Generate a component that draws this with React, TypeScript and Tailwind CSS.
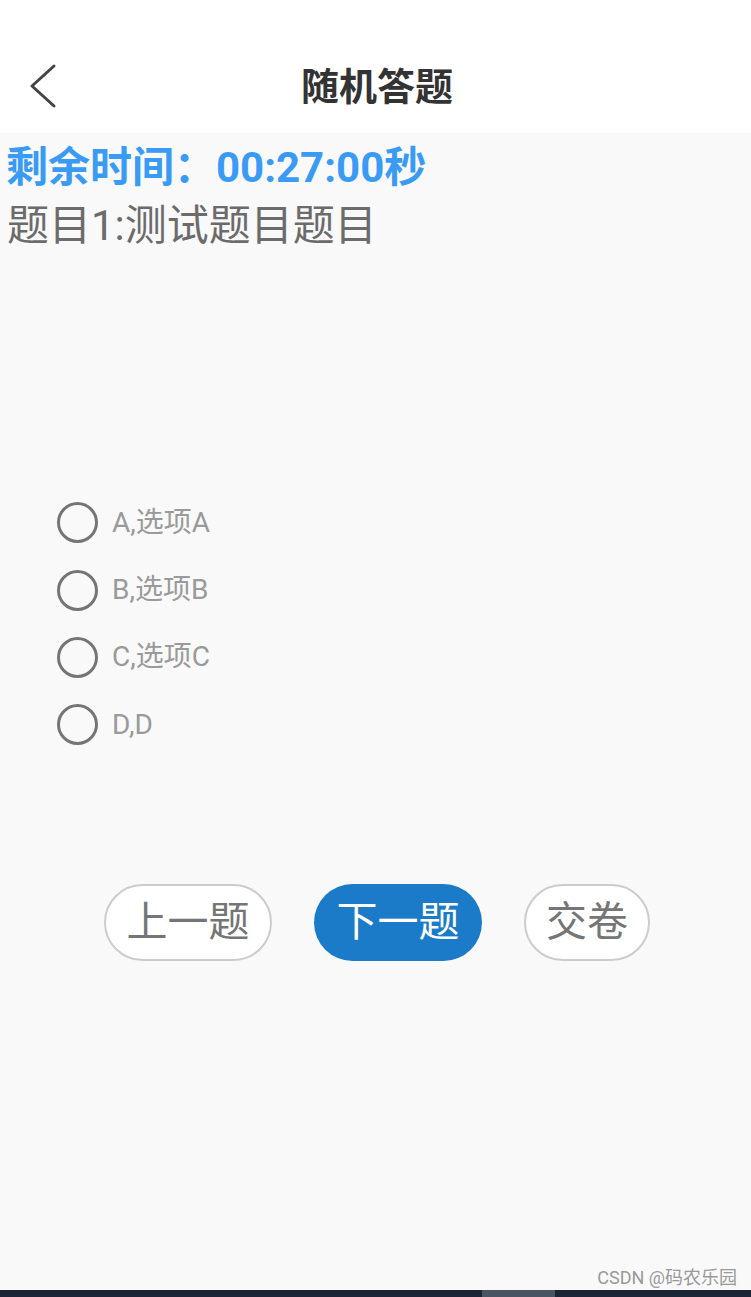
import React from "react";

const options = ["A,选项A", "B,选项B", "C,选项C", "D,D"];

export default function App() {
  return (
    <div
      className="w-[751px] h-[1297px] bg-[#f9f9f9] flex flex-col overflow-hidden"
      style={{ fontFamily: 'Roboto, "Noto Sans CJK SC", sans-serif' }}
    >
      <header className="h-[133px] bg-white pt-[40px] shrink-0">
        <div className="relative h-[93px] flex items-center justify-center">
          <svg
            className="absolute left-[28px] top-[23px]"
            width="30"
            height="46"
            viewBox="0 0 30 46"
            fill="none"
          >
            <path d="M26 3 L4 23 L26 43" stroke="#444" strokeWidth="3" strokeLinecap="round" strokeLinejoin="round" />
          </svg>
          <h1 className="text-[38px] font-bold text-[#333] leading-none pl-[3px]">随机答题</h1>
        </div>
      </header>

      <div className="pt-[10px]">
        <div className="pl-[6px] text-[42px] leading-[50px] font-bold text-[#3a9bf5]">剩余时间：00:27:00秒</div>
        <div className="pl-[7px] text-[42px] leading-[48px] text-[#6b6b6b] mt-[9px]">题目1:测试题目题目</div>
      </div>

      <div className="mt-[239px] pl-[57px] flex flex-col">
        {options.map((o) => (
          <div key={o} className="h-[67.4px] flex items-center gap-[14px]">
            <div className="w-[41px] h-[41px] rounded-full border-[3.5px] border-[#757575]" />
            <span className="text-[28px] text-[#9a9a9a] leading-none">{o}</span>
          </div>
        ))}
      </div>

      <div className="mt-[125px] flex justify-center gap-[42px] pl-[3px]">
        <button className="w-[168px] h-[77px] rounded-full bg-white border-2 border-[#cccccc] text-[41px] text-[#757575] leading-none">
          上一题
        </button>
        <button className="w-[168px] h-[77px] rounded-full bg-[#1b7bc8] text-[41px] text-white leading-none">
          下一题
        </button>
        <button className="w-[126px] h-[77px] rounded-full bg-white border-2 border-[#cccccc] text-[41px] text-[#757575] leading-none">
          交卷
        </button>
      </div>

      <div className="mt-auto flex justify-end pr-[14px] pb-[2px]">
        <span className="text-[18px] text-[#999] leading-[20px]">CSDN @码农乐园</span>
      </div>
      <div className="h-[7px] bg-[#1b2535] pl-[482px] shrink-0">
        <div className="w-[73px] h-full bg-[#4a5564]" />
      </div>
    </div>
  );
}
